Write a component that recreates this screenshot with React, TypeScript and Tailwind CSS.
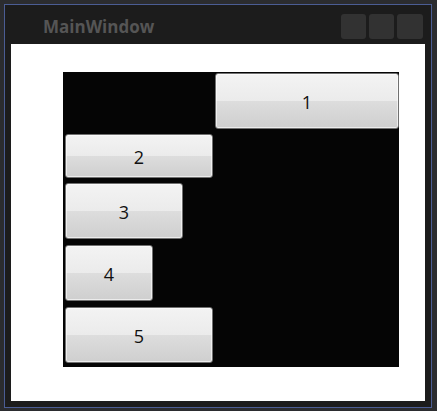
import React from 'react';

const Btn = ({ label, className }: { label: string; className: string }) => {
  return (
    <div
      className={
        'flex items-center justify-center rounded-[3px] border border-[#707070] bg-[linear-gradient(to_bottom,#f3f3f3_0%,#ebebeb_50%,#dddddd_50%,#cfcfcf_100%)] shadow-[inset_0_0_0_1px_rgba(255,255,255,0.6)] text-[18px] leading-none pt-[1px] text-[#111] ' +
        className
      }
    >
      {label}
    </div>
  );
};

const App = () => {
  return (
    <div
      className="w-[437px] h-[411px] bg-[#2b2c2f] pt-[4px] pl-[4px]"
      style={{ fontFamily: '"Open Sans", "Noto Sans", sans-serif' }}
    >
      <div className="w-[428px] h-[404px] border border-[#4b5d94] bg-[#1c1c1c] flex flex-col px-[6px] pb-[6px]">
        <div className="h-[39px] shrink-0 flex items-start -mx-[6px] pl-[38px] pr-[8px]">
          <span className="mt-[12px] text-[17px] font-bold leading-[20px] text-[#555555]">MainWindow</span>
          <div className="ml-auto mt-[9px] flex gap-[3px]">
            <div className="w-[25px] h-[25px] rounded-[3px] bg-[#323232]" />
            <div className="w-[25px] h-[25px] rounded-[3px] bg-[#323232]" />
            <div className="w-[26px] h-[25px] rounded-[3px] bg-[#323232]" />
          </div>
        </div>
        <div className="flex-1 bg-white pl-[52px] pt-[28px]">
          <div className="w-[336px] h-[295px] bg-[#050505] flex flex-col pl-[2px]">
            <Btn label="1" className="self-end w-[184px] h-[56px] mt-[1px]" />
            <Btn label="2" className="w-[148px] h-[44px] mt-[5px]" />
            <Btn label="3" className="w-[118px] h-[56px] mt-[5px]" />
            <Btn label="4" className="w-[88px] h-[56px] mt-[6px]" />
            <Btn label="5" className="w-[148px] h-[56px] mt-[6px]" />
          </div>
        </div>
      </div>
    </div>
  );
};

export default App;
